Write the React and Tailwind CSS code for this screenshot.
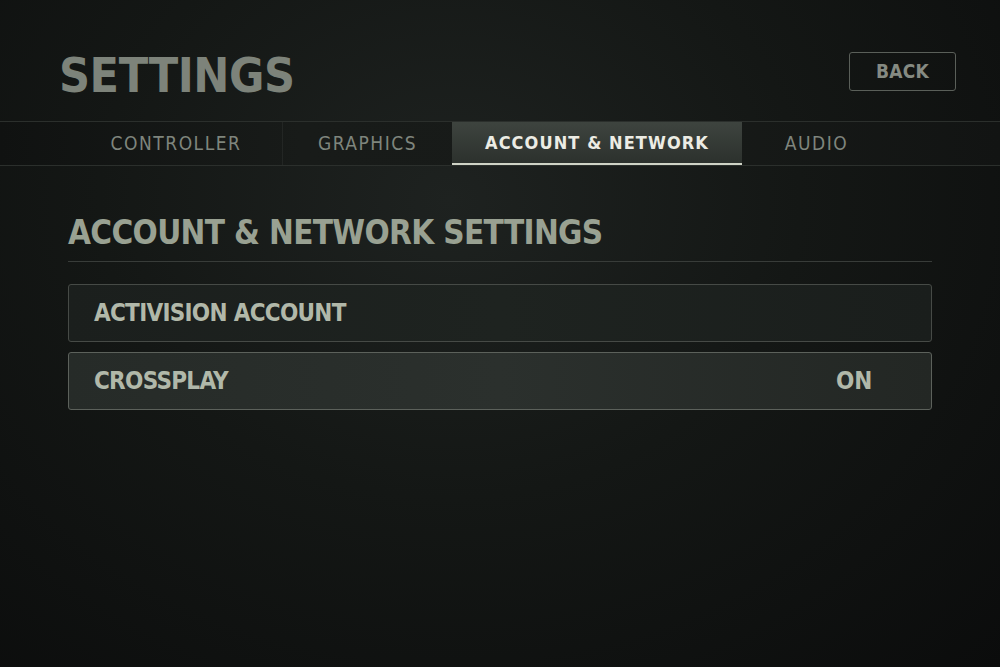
import React from 'react';

const font = { fontFamily: '"DejaVu Sans Condensed", "DejaVu Sans", sans-serif' };

const tabs = [
  { label: 'CONTROLLER', w: 'w-[213px]' },
  { label: 'GRAPHICS', w: 'w-[169px]' },
  { label: 'ACCOUNT & NETWORK', w: 'w-[290px]', active: true },
  { label: 'AUDIO', w: 'w-[149px]' },
];

const Row = ({ label, value, highlight }) => (
  <div
    className={`flex items-center justify-between h-[58px] pl-[25px] pr-[59px] rounded-[3px] border ${
      highlight
        ? 'border-[#5c615b] bg-gradient-to-r from-[#262b28] via-[#2b302d] to-[#232724]'
        : 'border-[#464a46] bg-gradient-to-r from-[#1b1f1d] via-[#1e2320] to-[#1a1e1c]'
    }`}
  >
    <span className="text-[24px] font-bold tracking-[-0.03em] text-[#b1b8a9]">{label}</span>
    {value && <span className="text-[24px] font-bold tracking-[-0.01em] text-[#b1b8a9]">{value}</span>}
  </div>
);

export default function App() {
  return (
    <div
      style={font}
      className="relative w-[1000px] h-[667px] overflow-hidden bg-[radial-gradient(ellipse_at_45%_30%,#1e2220_0%,#141715_45%,#0b0c0c_100%)]"
    >
      <div className="flex items-center justify-between pl-[59px] pr-[44px] pt-[50px] h-[121px] pb-[28px]">
        <h1 className="mt-[6px] text-[48px] font-bold tracking-[-0.01em] leading-none text-[#7d837a]">SETTINGS</h1>
        <button className="w-[107px] h-[39px] rounded-[3px] border border-[#5a5f59] text-[19px] font-bold tracking-[0.01em] text-[#858a82]">
          BACK
        </button>
      </div>

      <div className="flex h-[45px] pl-[70px] border-y border-[#2b2f2c] bg-[linear-gradient(90deg,#101211_0%,#181b19_30%,#171a18_70%,#121413_100%)]">
        {tabs.map((t, i) => (
          <div
            key={t.label}
            className={`${t.w} flex items-center justify-center ${
              t.active
                ? 'bg-gradient-to-b from-[#3e443f] to-[#2c312d] border-b-2 border-[#cfd3c6] text-[#ecece4] font-bold text-[18px] tracking-[0.06em]'
                : 'text-[#7f857d] text-[19px] tracking-[0.08em]'
            } ${i < 1 ? 'border-r border-[#232624]' : ''}`}
          >
            {t.label}
          </div>
        ))}
      </div>

      <div className="px-[68px] pt-[50px]">
        <h2 className="text-[33px] font-bold tracking-[-0.02em] leading-none text-[#99a192] pb-[12px] border-b border-[#383c39]">
          ACCOUNT &amp; NETWORK SETTINGS
        </h2>
        <div className="flex flex-col gap-[10px] mt-[22px]">
          <Row label="ACTIVISION ACCOUNT" />
          <Row label="CROSSPLAY" value="ON" highlight />
        </div>
      </div>
    </div>
  );
}
